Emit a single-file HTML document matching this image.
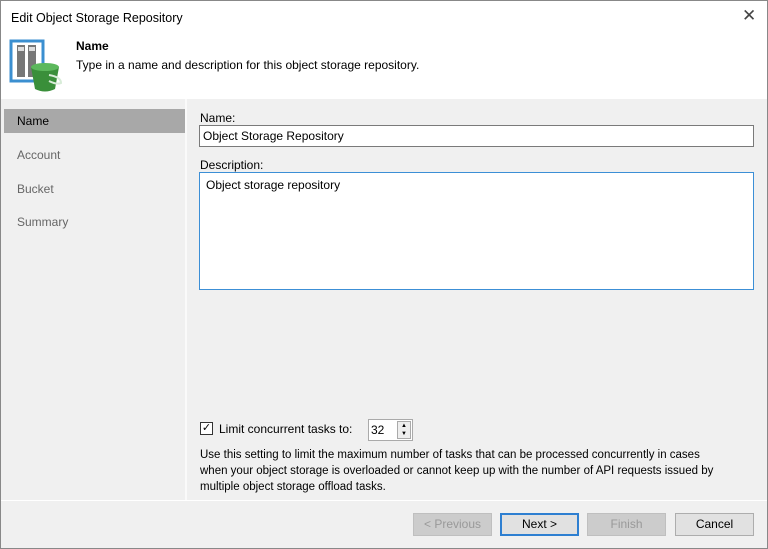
<!DOCTYPE html>
<html><head><style>
*{margin:0;padding:0;box-sizing:border-box}
body{width:768px;height:549px;background:#fff;font-family:"Liberation Sans",sans-serif;font-size:12px;color:#000;position:relative;overflow:hidden}
.win{position:absolute;left:0;top:0;width:768px;height:549px;border:1px solid #888;background:#f0f0f0}
.abs{position:absolute}
.btn{position:absolute;top:512px;width:79px;height:23px;background:#e1e1e1;border:1px solid #adadad;text-align:center;line-height:21px;font-size:12px}
.dis{background:#ccc;border-color:#bfbfbf;color:#999}
</style></head><body>
<div class="win">
 <div class="abs" style="left:0;top:0;width:766px;height:98px;background:#fff"></div>
 <div class="abs" style="left:10px;top:10px;font-size:12.5px">Edit Object Storage Repository</div>
 <div class="abs" style="left:741px;top:5px;font-size:17px;color:#444;font-weight:300">✕</div>
 <svg class="abs" style="left:8px;top:38px" width="54" height="56" viewBox="0 0 54 56">
  <rect x="2" y="2" width="32" height="40" fill="#fff" stroke="#3b8fd0" stroke-width="3"/>
  <rect x="8" y="6" width="8" height="32" fill="#777"/><rect x="19" y="6" width="8" height="32" fill="#777"/>
  <rect x="9" y="8" width="6" height="4" fill="#ddd"/><rect x="20" y="8" width="6" height="4" fill="#ddd"/>
  <path d="M22 28 L50 28 L46 50 Q36 55 26 50 Z" fill="#3a8f3a"/>
  <ellipse cx="36" cy="28" rx="14" ry="4" fill="#5cb85c"/>
  <path d="M40 36 Q52 38 52 44 Q48 46 40 42" fill="none" stroke="#d8ecd8" stroke-width="2"/>
 </svg>
 <div class="abs" style="left:75px;top:38px;font-weight:bold">Name</div>
 <div class="abs" style="left:75px;top:57px">Type in a name and description for this object storage repository.</div>
 <div class="abs" style="left:3px;top:102px;width:181px;height:397px;background:#f0f0f0"></div>
 <div class="abs" style="left:184px;top:98px;width:2px;height:401px;background:#fafafa"></div>
 <div class="abs" style="left:3px;top:108px;width:181px;height:24px;background:#a8a8a8"></div>
 <div class="abs" style="left:16px;top:113px">Name</div>
 <div class="abs" style="left:16px;top:147px;color:#666">Account</div>
 <div class="abs" style="left:16px;top:181px;color:#666">Bucket</div>
 <div class="abs" style="left:16px;top:214px;color:#666">Summary</div>
 <div class="abs" style="left:199px;top:110px">Name:</div>
 <div class="abs" style="left:198px;top:124px;width:555px;height:22px;background:#fff;border:1px solid #7a7a7a;padding:3px 3px">Object Storage Repository</div>
 <div class="abs" style="left:199px;top:157px">Description:</div>
 <div class="abs" style="left:198px;top:171px;width:555px;height:118px;background:#fff;border:1px solid #3c8fd6;padding:5px 6px">Object storage repository</div>
 <div class="abs" style="left:199px;top:421px;width:13px;height:13px;border:1px solid #333;background:#fff;font-size:11px;line-height:11px;text-align:center">✓</div>
 <div class="abs" style="left:218px;top:421px">Limit concurrent tasks to:</div>
 <div class="abs" style="left:367px;top:418px;width:45px;height:22px;background:#fff;border:1px solid #aaa;padding:3px 2px">32</div>
 <div class="abs" style="left:396px;top:420px;width:14px;height:18px;background:#eee;border:1px solid #aaa;font-size:6px;line-height:8px;text-align:center">▲<br>▼</div>
 <div class="abs" style="left:199px;top:446px;width:545px;line-height:16px;font-size:11.5px">Use this setting to limit the maximum number of tasks that can be processed concurrently in cases<br>when your object storage is overloaded or cannot keep up with the number of API requests issued by<br>multiple object storage offload tasks.</div>
 <div class="abs" style="left:0;top:499px;width:766px;height:1px;background:#fff"></div>
 <div class="btn dis" style="left:412px">&lt; Previous</div>
 <div class="btn" style="left:499px;border:2px solid #2e7fd1;line-height:19px">Next &gt;</div>
 <div class="btn dis" style="left:586px">Finish</div>
 <div class="btn" style="left:674px">Cancel</div>
</div>
</body></html>
